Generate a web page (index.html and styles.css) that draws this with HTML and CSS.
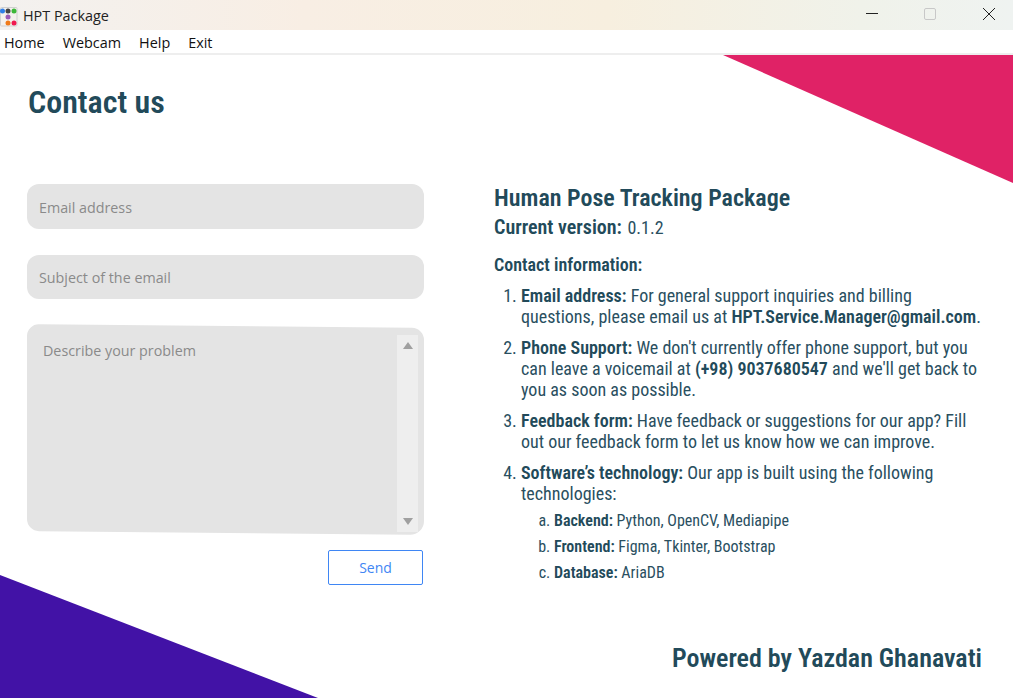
FILE: index.html
```html
<!DOCTYPE html>
<html lang="en">
<head>
  <meta charset="UTF-8" />
  <title>HPT Package</title>
  <link rel="stylesheet" href="styles.css">
</head>
<body>
  <div class="titlebar">
    <svg class="app-icon" width="18" height="24" viewBox="0 0 18 24">
      <rect x="0.5" y="4.5" width="16.5" height="18.5" rx="1" fill="#f4f1ee" stroke="#d0d0d0"/>
      <circle cx="2.5" cy="8" r="2.5" fill="#2f7fe8"/>
      <circle cx="8" cy="8" r="2.5" fill="#444"/>
      <circle cx="14" cy="8" r="2.5" fill="#3db83a"/>
      <circle cx="8" cy="14" r="2.5" fill="#9b59b6"/>
      <circle cx="8" cy="20" r="2.5" fill="#f07a1a"/>
      <circle cx="14" cy="20" r="2.5" fill="#f0194f"/>
    </svg>
    <span class="app-name">HPT Package</span>
    <div class="win-buttons">
      <svg width="12" height="12" viewBox="0 0 12 12"><path d="M0 5.500H12" stroke="#222" fill="none"/></svg>
      <svg width="12" height="12" viewBox="0 0 12 12"><rect x="0.500" y="0.500" width="11" height="11" rx="1.500" fill="none" stroke="#c8c8c8"/></svg>
      <svg width="12" height="12" viewBox="0 0 12 12"><path d="M0 0L12 12M12 0L0 12" stroke="#222" fill="none"/></svg>
    </div>
  </div>
  <div class="menubar">
    <span>Home</span><span>Webcam</span><span>Help</span><span>Exit</span>
  </div>
  <div class="content">
    <div class="tri-pink"></div>
    <div class="tri-purple"></div>

    <div class="left">
      <h1>Contact us</h1>
      <div class="field field-email">Email address</div>
      <div class="field field-subject">Subject of the email</div>
      <div class="field-problem">
        <span class="problem-text">Describe your problem</span>
        <div class="scrollbar">
          <svg width="10" height="7" viewBox="0 0 10 7"><path d="M0 7L5 0L10 7Z" fill="#a0a0a0"/></svg>
          <svg width="10" height="7" viewBox="0 0 10 7"><path d="M0 0L5 7L10 0Z" fill="#a0a0a0"/></svg>
        </div>
      </div>
      <div class="send-row"><button class="send">Send</button></div>
    </div>

    <div class="right">
      <h2>Human Pose Tracking Package</h2>
      <p class="version"><b>Current version:</b> <span class="num">0.1.2</span></p>
      <p class="contact-title">Contact information:</p>
      <ol class="info">
        <li><b>Email address:</b> For general support inquiries and billing questions, please email us at <b>HPT.Service.Manager@gmail.com</b>.</li>
        <li><b>Phone Support:</b> We don't currently offer phone support, but you can leave a voicemail at <b>(+98) 9037680547</b> and we'll get back to you as soon as possible.</li>
        <li><b>Feedback form:</b> Have feedback or suggestions for our app? Fill out our feedback form to let us know how we can improve.</li>
        <li><b>Software’s technology:</b> Our app is built using the following technologies:
          <ol class="tech" type="a">
            <li><b>Backend:</b> Python, OpenCV, Mediapipe</li>
            <li><b>Frontend:</b> Figma, Tkinter, Bootstrap</li>
            <li><b>Database:</b> AriaDB</li>
          </ol>
        </li>
      </ol>
      <p class="powered">Powered by Yazdan Ghanavati</p>
    </div>
  </div>
</body>
</html>
```

FILE: styles.css
```css
html, body { margin: 0; padding: 0; }
body { width: 1013px; height: 698px; overflow: hidden; background: white; font-family: "Open Sans", sans-serif; }

.titlebar { height: 30px; display: flex; align-items: center; background: linear-gradient(90deg, #f3f1ef 0%, #f8eee4 30%, #f7efdf 60%, #f0f2ea 85%, #eff3f1 100%); }
.app-icon { margin-top: -1px; flex: none; }
.app-name { margin-left: 5px; font-size: 14.4px; color: #222; }
.win-buttons { margin-left: auto; margin-bottom: 2px; display: flex; gap: 46px; padding-right: 18px; }
.win-buttons svg:last-child { margin-left: 1px; }

.menubar { height: 22px; padding: 1px 0 0 4px; border-bottom: 2px solid #eeeeee; display: flex; align-items: center; gap: 18px; font-size: 14.4px; color: #111; }

.content { position: relative; height: 643px; display: flex; color: #2a4f5f; font-family: Roboto, sans-serif; font-stretch: condensed; }
.content b, h1, h2, .contact-title, .powered { color: #224a5a; font-weight: 600; }
.tri-pink { position: absolute; top: 0; right: 0; width: 290px; height: 128px; background: #e02266; clip-path: polygon(0 0, 100% 0, 100% 100%); }
.tri-purple { position: absolute; left: 0; bottom: 0; width: 318px; height: 123px; background: #4212a6; clip-path: polygon(0 0, 100% 100%, 0 100%); }

.left { position: relative; width: 397px; margin-left: 27px; flex: none; }
h1 { margin: 28px 0 0 1px; font-size: 32px; line-height: 38px; }
.field, .field-problem { border-radius: 12px; color: #8a8a8a; font-family: "Open Sans", sans-serif; font-stretch: normal; font-size: 14.3px; }
.field { background: #e4e4e4; }
.field-email { margin-top: 63px; height: 45px; line-height: 47px; padding-left: 12px; }
.field-subject { margin-top: 26px; height: 44px; line-height: 46px; padding-left: 12px; }
.field-problem { position: relative; z-index: 0; margin-top: 27px; height: 207px; display: flex; justify-content: space-between; padding: 9px 6px 1px 16px; box-sizing: border-box; }
/* the box is very slightly tilted in the screenshot */
.field-problem::before { content: ""; position: absolute; inset: 0; z-index: -1; background: #e4e4e4; border-radius: 12px 12px 14px 12px; transform: skewY(0.55deg); }
.problem-text { line-height: 32px; height: 32px; }
.scrollbar { width: 21px; background: #eeeeee; display: flex; flex-direction: column; justify-content: space-between; align-items: center; padding: 7px 0; box-sizing: border-box; }
.send-row { display: flex; justify-content: flex-end; margin-top: 17px; padding-right: 1px; }
.send { width: 95px; height: 35px; background: white; border: 1px solid #3f86f4; border-radius: 2px; color: #3f86f4; font-family: "Open Sans", sans-serif; font-size: 14px; padding: 0; }

.right { position: relative; margin-left: 70px; width: 492px; font-size: 18px; line-height: 21px; }
h2 { margin: 128px 0 0; font-size: 24px; line-height: 30px; }
.version { margin: 2px 0 0; font-size: 20px; line-height: 25px; }
.version .num { font-size: 18px; margin-left: 1px; }
.contact-title { margin: 14px 0 0; line-height: 22px; }
.info { margin: 9px 0 0; padding-left: 27px; }
.info > li { margin-bottom: 10px; }
.tech { margin: 4px 0 0; padding-left: 33px; font-size: 16px; line-height: 26px; }
.powered { position: absolute; top: 586px; right: 4px; margin: 0; font-size: 26px; line-height: 34px; white-space: nowrap; }
```
